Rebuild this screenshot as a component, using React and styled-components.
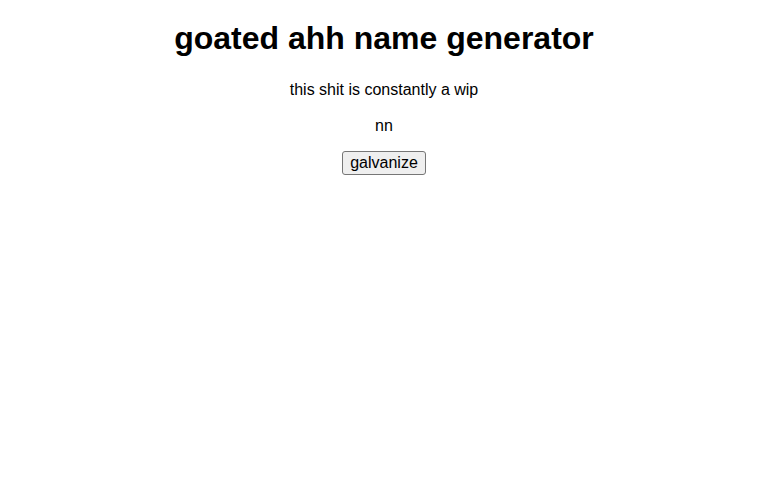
import React, { useState } from 'react'
import styled, { createGlobalStyle } from 'styled-components'

const GlobalStyle = createGlobalStyle`
  body {
    margin: 0;
    background: #fff;
    color: #000;
    font-family: "Liberation Sans", Arial, sans-serif;
  }
`;

const Page = styled.div`
  text-align: center;
  padding: 0 8px;
`;

const Title = styled.h1`
  font-size: 32px;
  font-weight: bold;
  margin: 20px 0 23.5px;
`;

const Line = styled.p`
  font-size: 16px;
  margin: ${props => props.$gap || '16px'} 0 16px;
`;

const Galvanize = styled.button`
  font-family: "Liberation Sans", Arial, sans-serif;
  font-size: 16px;
  color: #000;
  background: #efefef;
  border: 1px solid #767676;
  border-radius: 3px;
  padding: 2px 7px;
  cursor: pointer;
`;

const names = ['nn', 'zz', 'kk', 'vv'];

const App = () => {
  const [name, setName] = useState('nn');
  return (
    <Page>
      <GlobalStyle />
      <Title>goated ahh name generator</Title>
      <Line>this shit is constantly a wip</Line>
      <Line $gap="18px">{name}</Line>
      <Galvanize onClick={() => setName(names[Math.floor(Math.random() * names.length)])}>
        galvanize
      </Galvanize>
    </Page>
  )
}

export default App
